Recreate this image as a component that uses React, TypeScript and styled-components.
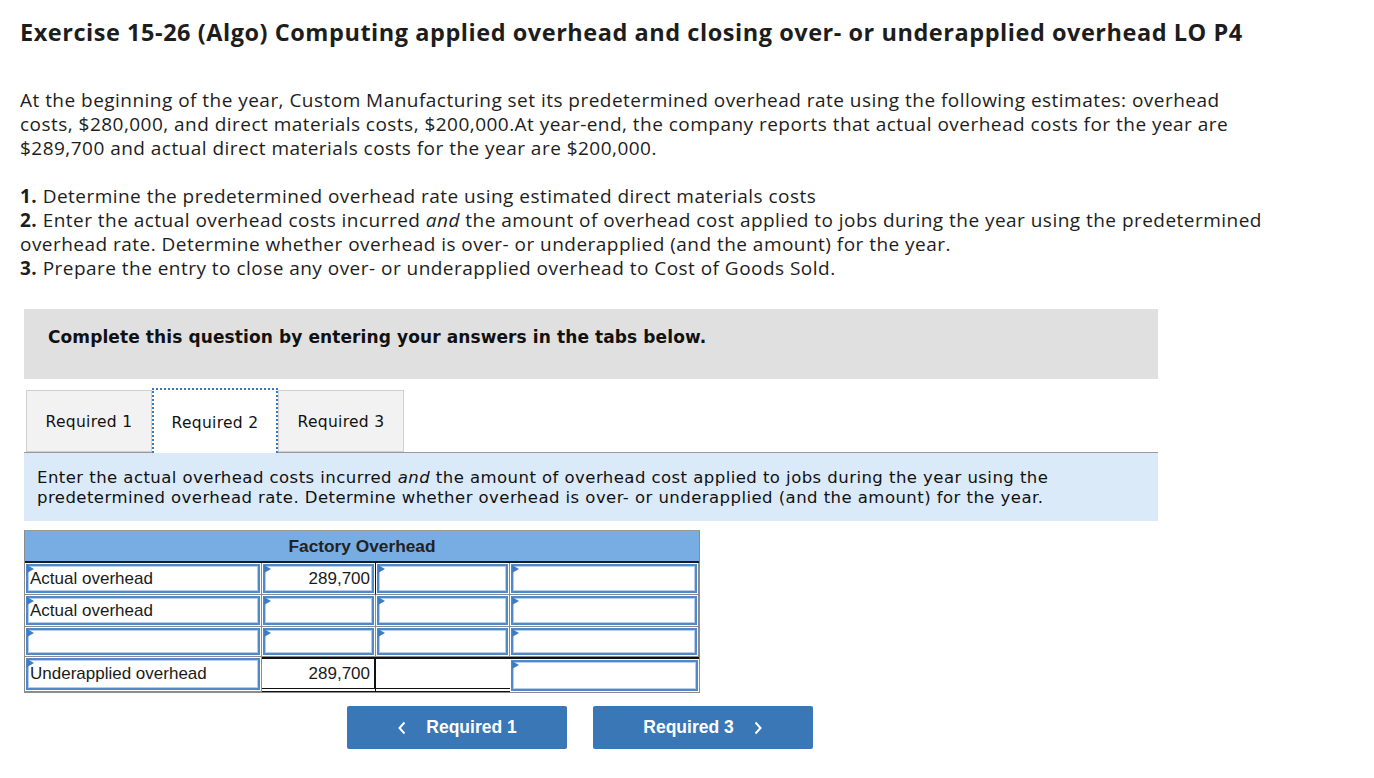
import React from "react";
import styled, { createGlobalStyle } from "styled-components";

const Global = createGlobalStyle`
  html, body { margin: 0; padding: 0; background: #fff; }
  body { color: #1a1a1a; }
  * { box-sizing: border-box; }
`;

const Page = styled.div`
  width: 1374px;
  padding: 16px 0 0 20px;
`;

const Title = styled.h1`
  margin: 0;
  font-family: "Open Sans", "Liberation Sans", sans-serif;
  font-weight: 700;
  font-size: 23.5px;
  line-height: 32px;
  color: #1d1d1d;
  letter-spacing: 0.54px;
  white-space: nowrap;
`;

const Para = styled.p`
  margin: 40px 0 0 0;
  font-family: "Open Sans", "Liberation Sans", sans-serif;
  font-size: 19px;
  letter-spacing: 0.47px;
  line-height: 24px;
  color: #1d1d1d;
  white-space: nowrap;
`;

const List = styled.div`
  margin-top: 24px;
  font-family: "Open Sans", "Liberation Sans", sans-serif;
  font-size: 19px;
  letter-spacing: 0.47px;
  line-height: 24px;
  color: #1d1d1d;
  white-space: nowrap;
`;

const Item = styled.div``;

const Section = styled.div`
  margin: 29px 0 0 4px;
  width: 1134px;
`;

const Banner = styled.div`
  height: 70px;
  background: #e0e0e0;
  padding: 18px 24px 0;
  font-family: "DejaVu Sans", Verdana, sans-serif;
  font-weight: 700;
  font-size: 17px;
  letter-spacing: 0.1px;
  color: #111;
`;

const Tabs = styled.div`
  margin-top: 9px;
  display: flex;
  align-items: flex-end;
  padding-left: 2px;
  border-bottom: 1px solid #9a9a9a;
  height: 65px;
`;

const Tab = styled.div<{ $active?: boolean }>`
  width: 126px;
  display: flex;
  align-items: center;
  justify-content: center;
  font-family: "DejaVu Sans", Verdana, sans-serif;
  font-size: 15.5px;
  letter-spacing: 0.3px;
  color: #111;
  background: ${(p) => (p.$active ? "#fff" : "#f2f2f2")};
  border: ${(p) => (p.$active ? "2px dotted #3b78c4" : "1px solid #cfcfcf")};
  border-bottom: ${(p) => (p.$active ? "none" : "1px solid #cfcfcf")};
  height: ${(p) => (p.$active ? "65px" : "62px")};
  margin-bottom: ${(p) => (p.$active ? "-1px" : "0")};
  padding-top: ${(p) => (p.$active ? "3px" : "1px")};
  position: relative;
  z-index: ${(p) => (p.$active ? 1 : 0)};
`;

const Instr = styled.div`
  background: #dbeaf8;
  padding: 15px 13px 13px;
  font-family: "DejaVu Sans", Verdana, sans-serif;
  font-size: 16.5px;
  letter-spacing: 0.45px;
  line-height: 20px;
  color: #111;
  white-space: nowrap;
`;

const Table = styled.div`
  margin-top: 9px;
  width: 676px;
  border: 1px solid #8c8c8c;
  border-top-color: #9a9a9a;
  display: grid;
  grid-template-columns: 237px 114px 134px 1fr;
`;

const Header = styled.div`
  grid-column: 1 / -1;
  height: 32px;
  background: #78ade3;
  border-bottom: 2px solid #1a1a1a;
  display: flex;
  align-items: center;
  justify-content: center;
  font-family: "Liberation Sans", Arial, sans-serif;
  font-weight: 700;
  font-size: 17.3px;
  color: #222;
  padding-top: 1px;
`;

const Cell = styled.div<{ $h?: number; $sep?: string }>`
  height: ${(p) => p.$h ?? 32}px;
  padding: 1px;
  border-right: 1px solid ${(p) => p.$sep ?? "#8c8c8c"};
  border-bottom: 1px solid #8c8c8c;
  &:last-child { border-right: none; }
`;

const Input = styled.div<{ $align?: string }>`
  position: relative;
  height: 100%;
  border: 2px solid #5088c8;
  box-shadow: inset 0 0 0 1px #b4cdec;
  background: #fff;
  display: flex;
  align-items: center;
  justify-content: ${(p) => (p.$align === "right" ? "flex-end" : "flex-start")};
  padding: 0 2px 0 2px;
  font-family: "Liberation Sans", Arial, sans-serif;
  font-size: 17px;
  color: #1a1a1a;
  &::before {
    content: "";
    position: absolute;
    left: -1px;
    top: -1px;
    border-left: 7px solid #3e7cc4;
    border-top: 4px solid transparent;
    border-bottom: 4px solid transparent;
  }
`;

const Plain = styled.div<{ $right?: boolean; $double?: boolean }>`
  height: 35px;
  border-top: 2px solid #111;
  border-right: ${(p) => (p.$right ? "2px solid #111" : "none")};
  border-bottom: ${(p) => (p.$double ? "4px double #111" : "none")};
  display: flex;
  align-items: center;
  justify-content: flex-end;
  padding-right: 4px;
  font-family: "Liberation Sans", Arial, sans-serif;
  font-size: 17px;
  color: #1a1a1a;
`;

const LastCell = styled.div`
  height: 35px;
  padding: 1px;
  border-top: 2px solid #111;
`;

const Nav = styled.div`
  display: flex;
  gap: 26px;
  margin: 13px 0 0 323px;
`;

const NavButton = styled.button`
  width: 220px;
  height: 43px;
  border: none;
  border-radius: 2px;
  background: #3a77b7;
  color: #fff;
  font-family: "Liberation Sans", Arial, sans-serif;
  font-weight: 700;
  font-size: 17.5px;
  display: flex;
  align-items: center;
  justify-content: center;
  gap: 19px;
  cursor: pointer;
`;

const Chevron = ({ dir }: { dir: "left" | "right" }) => (
  <svg width="10" height="14" viewBox="0 0 10 14">
    <path
      d={dir === "left" ? "M7.5 1.5 L2.5 7 L7.5 12.5" : "M2.5 1.5 L7.5 7 L2.5 12.5"}
      fill="none"
      stroke="#fff"
      strokeWidth="2"
    />
  </svg>
);

export default function App() {
  return (
    <Page>
      <Global />
      <Title>
        Exercise 15-26 (Algo) Computing applied overhead and closing over- or underapplied overhead LO P4
      </Title>
      <Para>
        At the beginning of the year, Custom Manufacturing set its predetermined overhead rate using the following estimates: overhead
        <br />
        costs, $280,000, and direct materials costs, $200,000.At year-end, the company reports that actual overhead costs for the year are
        <br />
        $289,700 and actual direct materials costs for the year are $200,000.
      </Para>
      <List>
        <Item>
          <b>1.</b> Determine the predetermined overhead rate using estimated direct materials costs
        </Item>
        <Item>
          <b>2.</b> Enter the actual overhead costs incurred <i>and</i> the amount of overhead cost applied to jobs during the year using the predetermined
          <br />
          overhead rate. Determine whether overhead is over- or underapplied (and the amount) for the year.
        </Item>
        <Item>
          <b>3.</b> Prepare the entry to close any over- or underapplied overhead to Cost of Goods Sold.
        </Item>
      </List>
      <Section>
        <Banner>Complete this question by entering your answers in the tabs below.</Banner>
        <Tabs>
          <Tab>Required 1</Tab>
          <Tab $active>Required 2</Tab>
          <Tab>Required 3</Tab>
        </Tabs>
        <Instr>
          Enter the actual overhead costs incurred <i>and</i> the amount of overhead cost applied to jobs during the year using the
          <br />
          predetermined overhead rate. Determine whether overhead is over- or underapplied (and the amount) for the year.
        </Instr>
        <Table>
          <Header>Factory Overhead</Header>
          <Cell><Input>Actual overhead</Input></Cell>
          <Cell $sep="#111"><Input $align="right">289,700</Input></Cell>
          <Cell><Input /></Cell>
          <Cell><Input /></Cell>

          <Cell><Input>Actual overhead</Input></Cell>
          <Cell><Input /></Cell>
          <Cell><Input /></Cell>
          <Cell><Input /></Cell>

          <Cell $h={30}><Input /></Cell>
          <Cell $h={30}><Input /></Cell>
          <Cell $h={30}><Input /></Cell>
          <Cell $h={30}><Input /></Cell>

          <Cell $h={35}><Input>Underapplied overhead</Input></Cell>
          <Plain $right $double>289,700</Plain>
          <Plain $double />
          <LastCell><Input /></LastCell>
        </Table>
        <Nav>
          <NavButton>
            <Chevron dir="left" />
            Required 1
          </NavButton>
          <NavButton>
            Required 3
            <Chevron dir="right" />
          </NavButton>
        </Nav>
      </Section>
    </Page>
  );
}
